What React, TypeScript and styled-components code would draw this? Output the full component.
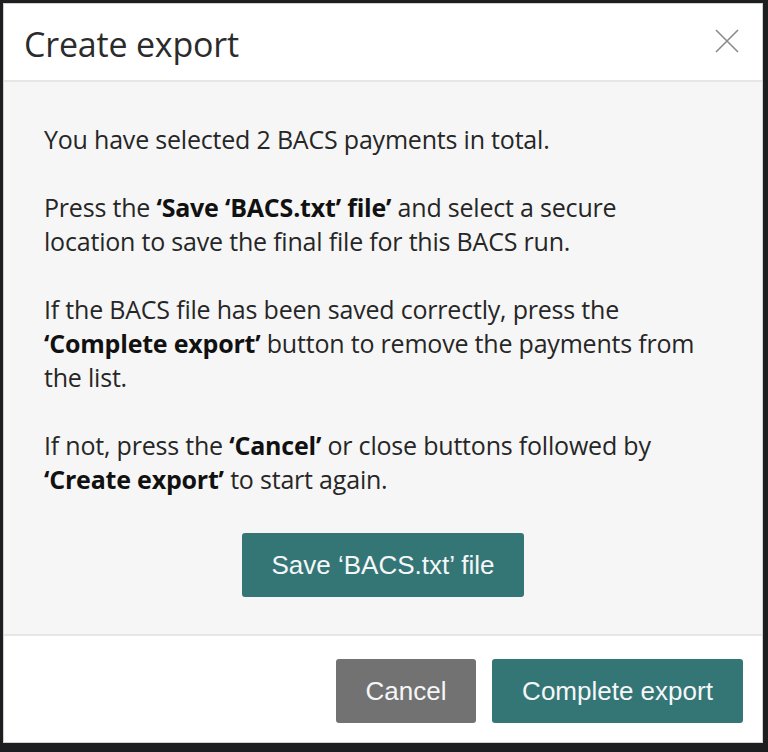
import styled, { createGlobalStyle } from 'styled-components';

const GlobalStyle = createGlobalStyle`
	html, body {
		margin: 0;
		padding: 0;
		background: #1d1e20;
	}
	* {
		box-sizing: border-box;
	}
`;

const Backdrop = styled.div`
	width: 768px;
	height: 752px;
	padding: 3px 5px 9px 3px;
	display: flex;
`;

const Dialog = styled.div`
	flex: 1;
	display: flex;
	flex-direction: column;
	background: #ffffff;
	border: 1px solid #d0d0d0;
`;

const Header = styled.div`
	height: 78px;
	display: flex;
	align-items: center;
	justify-content: space-between;
	padding: 3px 22px 0 20px;
	border-bottom: 2px solid #e6e6e6;
`;

const Title = styled.h1`
	margin: 0;
	font-family: 'Open Sans', 'Noto Sans', sans-serif;
	font-weight: 400;
	font-size: 34px;
	color: #2b2b2b;
	letter-spacing: -0.2px;
`;

const CloseButton = styled.button`
	border: none;
	background: none;
	padding: 0;
	margin-top: -6px;
	width: 26px;
	height: 26px;
	display: flex;
	cursor: pointer;
`;

const Body = styled.div`
	flex: 1;
	background: #f6f6f6;
	padding: 40px 40px 0 40px;
	display: flex;
	flex-direction: column;
	border-bottom: 2px solid #e6e6e6;
`;

const Paragraph = styled.p`
	max-width: 664px;
	margin: 0 0 34px 0;
	font-family: 'Open Sans', 'Noto Sans', sans-serif;
	font-size: 25px;
	line-height: 34px;
	letter-spacing: -0.2px;
	color: #262626;

	&:last-of-type {
		margin-bottom: 37px;
	}

	b {
		color: #111;
		font-weight: 700;
	}
`;

const ButtonRow = styled.div<{ $align: 'center' | 'flex-end' }>`
	display: flex;
	justify-content: ${p => p.$align};
	gap: 16px;
`;

const Button = styled.button<{ $variant: 'primary' | 'secondary'; $width: number }>`
	width: ${p => p.$width}px;
	height: 64px;
	border: none;
	border-radius: 3px;
	background: ${p => (p.$variant === 'primary' ? '#347676' : '#727272')};
	color: #f4f7f7;
	font-family: 'Liberation Sans', Arial, sans-serif;
	font-size: 26px;
	cursor: pointer;
`;

const Footer = styled.div`
	height: 106px;
	display: flex;
	align-items: flex-start;
	justify-content: flex-end;
	padding: 23px 19px 0 0;
`;

const App = () => (
	<>
		<GlobalStyle />
		<Backdrop>
			<Dialog>
				<Header>
					<Title>Create export</Title>
					<CloseButton aria-label="Close">
						<svg width="26" height="26" viewBox="0 0 26 26">
							<path d="M2 2 L24 24 M24 2 L2 24" stroke="#8a8a8a" strokeWidth="1.6" fill="none" />
						</svg>
					</CloseButton>
				</Header>

				<Body>
					<Paragraph>You have selected 2 BACS payments in total.</Paragraph>
					<Paragraph>
						Press the <b>‘Save ‘BACS.txt’ file’</b> and select a secure location to save the final file for this BACS run.
					</Paragraph>
					<Paragraph>
						If the BACS file has been saved correctly, press the <b>‘Complete export’</b> button to remove the payments from
						the list.
					</Paragraph>
					<Paragraph>
						If not, press the <b>‘Cancel’</b> or close buttons followed by <b>‘Create export’</b> to start again.
					</Paragraph>
					<ButtonRow $align="center">
						<Button $variant="primary" $width={282}>
							Save ‘BACS.txt’ file
						</Button>
					</ButtonRow>
				</Body>

				<Footer>
					<ButtonRow $align="flex-end">
						<Button $variant="secondary" $width={140}>
							Cancel
						</Button>
						<Button $variant="primary" $width={251}>
							Complete export
						</Button>
					</ButtonRow>
				</Footer>
			</Dialog>
		</Backdrop>
	</>
);

export default App;
